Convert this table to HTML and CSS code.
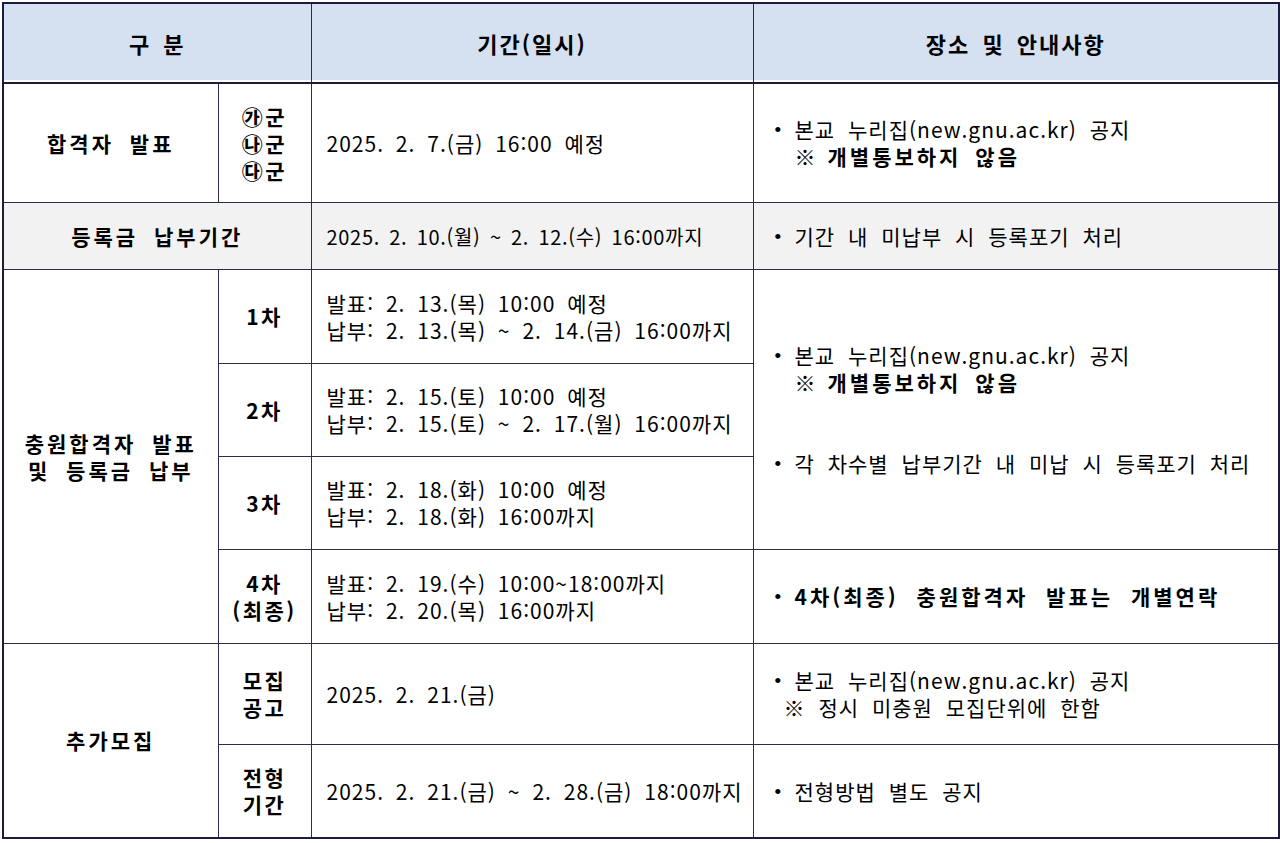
FILE: index.html
```html
<!DOCTYPE html>
<html lang="ko">
<head>
<meta charset="utf-8">
<title>일정</title>
<link rel="stylesheet" href="styles.css">
</head>
<body>
<table class="sched">
  <colgroup>
    <col class="c1"><col class="c2"><col class="c3"><col class="c4">
  </colgroup>
  <thead>
    <tr class="r-head">
      <th colspan="2">구 분</th>
      <th>기간(일시)</th>
      <th>장소 및 안내사항</th>
    </tr>
  </thead>
  <tbody>
    <tr class="r1">
      <td class="lbl">합격자 발표</td>
      <td class="lbl sub"><div class="ln">㉮군</div><div class="ln">㉯군</div><div class="ln">㉰군</div></td>
      <td class="date">2025. 2. 7.(금) 16:00 예정</td>
      <td class="note">
        <div class="bl"><span class="dot">•</span><span>본교 누리집(new.gnu.ac.kr) 공지<br><span class="kome">※</span><b>개별통보하지 않음</b></span></div>
      </td>
    </tr>
    <tr class="r2 gray">
      <td class="lbl" colspan="2">등록금 납부기간</td>
      <td class="date small">2025. 2. 10.(월) ~ 2. 12.(수) 16:00까지</td>
      <td class="note">
        <div class="bl"><span class="dot">•</span><span>기간 내 미납부 시 등록포기 처리</span></div>
      </td>
    </tr>
    <tr class="r3">
      <td class="lbl" rowspan="4">충원합격자 발표<br>및 등록금 납부</td>
      <td class="lbl sub">1차</td>
      <td class="date">발표: 2. 13.(목) 10:00 예정<br>납부: 2. 13.(목) ~ 2. 14.(금) 16:00까지</td>
      <td class="note" rowspan="3">
        <div class="bl"><span class="dot">•</span><span>본교 누리집(new.gnu.ac.kr) 공지<br><span class="kome">※</span><b>개별통보하지 않음</b></span></div>
        <div class="bl gap"><span class="dot">•</span><span>각 차수별 납부기간 내 미납 시 등록포기 처리</span></div>
      </td>
    </tr>
    <tr class="r4">
      <td class="lbl sub">2차</td>
      <td class="date">발표: 2. 15.(토) 10:00 예정<br>납부: 2. 15.(토) ~ 2. 17.(월) 16:00까지</td>
    </tr>
    <tr class="r5">
      <td class="lbl sub">3차</td>
      <td class="date">발표: 2. 18.(화) 10:00 예정<br>납부: 2. 18.(화) 16:00까지</td>
    </tr>
    <tr class="r6">
      <td class="lbl sub"><div class="ln">4차</div><div class="ln">(최종)</div></td>
      <td class="date">발표: 2. 19.(수) 10:00~18:00까지<br>납부: 2. 20.(목) 16:00까지</td>
      <td class="note">
        <div class="bl"><span class="dot">•</span><b class="wide">4차(최종) 충원합격자 발표는 개별연락</b></div>
      </td>
    </tr>
    <tr class="r7">
      <td class="lbl" rowspan="2">추가모집</td>
      <td class="lbl sub"><div class="ln">모집</div><div class="ln">공고</div></td>
      <td class="date">2025. 2. 21.(금)</td>
      <td class="note">
        <div class="bl"><span class="dot">•</span><span>본교 누리집(new.gnu.ac.kr) 공지</span></div>
        <div class="ref">※ 정시 미충원 모집단위에 한함</div>
      </td>
    </tr>
    <tr class="r8">
      <td class="lbl sub"><div class="ln">전형</div><div class="ln">기간</div></td>
      <td class="date">2025. 2. 21.(금) ~ 2. 28.(금) 18:00까지</td>
      <td class="note">
        <div class="bl"><span class="dot">•</span><span>전형방법 별도 공지</span></div>
      </td>
    </tr>
  </tbody>
</table>
</body>
</html>
```

FILE: styles.css
```css
html, body {
  margin: 0;
  padding: 0;
  background: #ffffff;
}

body {
  font-family: "Noto Sans CJK KR", "Noto Sans", sans-serif;
  color: #000000;
}

.sched {
  margin: 2px 0 0 2px;
  width: 1276px;
  table-layout: fixed;
  border-collapse: collapse;
  border: 2px solid #1b1c3c;
  font-size: 21px;
  line-height: 27px;
}

.c1 { width: 215px; }
.c2 { width: 93px; }
.c3 { width: 442px; }
.c4 { width: 526px; }

.sched th,
.sched td {
  border: 1px solid #2a2c4c;
  padding: 0;
  vertical-align: middle;
}

.sched th {
  background: #d5e0f1;
  font-size: 22px;
  font-weight: 700;
  text-align: center;
  height: 78px;
  letter-spacing: 2px;
  word-spacing: 4px;
  border-bottom: 2px solid #1b1c3c;
  box-shadow: inset 0 -2px 0 #ffffff;
}

.r1 td { height: 118px; }
.r2 td { height: 66px; }
.r3 td { height: 93px; }
.r4 td { height: 92px; }
.r5 td { height: 92px; }
.r6 td { height: 93px; }
.r7 td { height: 100px; }
.r8 td { height: 92px; }

.gray td { background: #f2f2f2; }

.lbl {
  text-align: center;
  font-weight: 700;
  font-size: 21px;
  letter-spacing: 3px;
  word-spacing: 7px;
}

.sub {
  font-size: 21px;
  letter-spacing: 2.5px;
}

.ln {
  height: 27px;
  line-height: 27px;
}

.date {
  padding-left: 15px !important;
  white-space: nowrap;
  letter-spacing: 1px;
  word-spacing: 5px;
}

.date.small {
  font-size: 20px;
  letter-spacing: 0.7px;
  word-spacing: 3px;
}

.note {
  padding-left: 21px !important;
  letter-spacing: 1px;
  word-spacing: 6px;
  white-space: nowrap;
}

.note b {
  letter-spacing: 3px;
  word-spacing: 5px;
}

.kome {
  display: inline-block;
  margin-right: 11px;
}

.note b.wide {
  letter-spacing: 3px;
  word-spacing: 9px;
}

.bl {
  display: flex;
  align-items: flex-start;
}

.dot {
  width: 20px;
  flex: none;
  font-family: "Liberation Sans", sans-serif;
  font-size: 19px;
  letter-spacing: 0;
}

.bl.gap { margin-top: 54px; }

.ref {
  padding-left: 9px;
}
```
